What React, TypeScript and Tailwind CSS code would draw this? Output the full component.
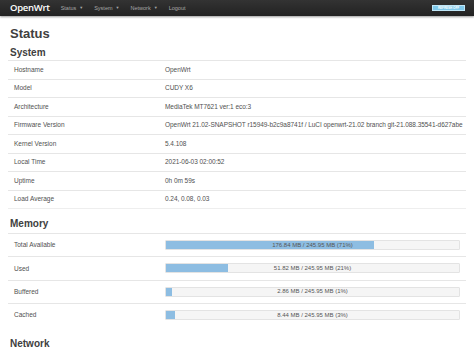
import React from 'react';

const sysRows: [string, string][] = [
  ['Hostname', 'OpenWrt'],
  ['Model', 'CUDY X6'],
  ['Architecture', 'MediaTek MT7621 ver:1 eco:3'],
  ['Firmware Version', 'OpenWrt 21.02-SNAPSHOT r15949-b2c9a8741f / LuCI openwrt-21.02 branch git-21.088.35541-d627abe'],
  ['Kernel Version', '5.4.108'],
  ['Local Time', '2021-06-03 02:00:52'],
  ['Uptime', '0h 0m 59s'],
  ['Load Average', '0.24, 0.08, 0.03'],
];

const memRows: { label: string; text: string; pct: number }[] = [
  { label: 'Total Available', text: '176.84 MB / 245.95 MB (71%)', pct: 71 },
  { label: 'Used', text: '51.82 MB / 245.95 MB (21%)', pct: 21 },
  { label: 'Buffered', text: '2.86 MB / 245.95 MB (1%)', pct: 1 },
  { label: 'Cached', text: '8.44 MB / 245.95 MB (3%)', pct: 3 },
];

const Caret = () => <span className="ml-[3px] text-[4px] align-middle">▼</span>;

export default function App() {
  return (
    <div className="w-[474px] h-[349px] overflow-hidden bg-white text-[#404040] font-['Liberation_Sans','Open_Sans',sans-serif]">
      <div className="h-[16px] flex items-center px-[10px] bg-gradient-to-b from-[#333] to-[#222] shadow-[0_1px_2px_rgba(0,0,0,0.4)]">
        <span className="text-[9.5px] text-white font-semibold tracking-[-0.3px] font-['Open_Sans',sans-serif]">OpenWrt</span>
        <nav className="flex items-center ml-[11px] gap-[11px] text-[5.5px] text-[#a8a8a8]">
          <span>Status<Caret /></span>
          <span>System<Caret /></span>
          <span>Network<Caret /></span>
          <span>Logout</span>
        </nav>
        <span className="ml-auto mr-[-1px] h-[6px] w-[33px] bg-[#7fc8ea] border border-[#bfe6f7] text-[3px] leading-[4px] text-white text-center font-bold">REFRESH OFF</span>
      </div>

      <div className="px-[8px]">
        <h2 className="pl-[2px] mt-[10px] text-[13px] leading-[16px] font-bold">Status</h2>
        <h3 className="pl-[2px] mt-[5px] text-[10px] leading-[12px] font-bold">System</h3>
        <div className="mt-[1px] border-b border-[#eee]">
          {sysRows.map(([k, v]) => (
            <div key={k} className="h-[18.5px] border-t border-[#e6e6e6] flex items-center text-[6.5px] text-[#505050]">
              <span className="w-[157px] pl-[6px]">{k}</span>
              <span className="whitespace-nowrap tracking-[-0.05px]">{v}</span>
            </div>
          ))}
        </div>

        <h3 className="pl-[2px] mt-[9px] text-[10px] leading-[12px] font-bold">Memory</h3>
        <div className="mt-[3px]">
          {memRows.map(r => (
            <div key={r.label} className="h-[23.3px] border-t border-[#e6e6e6] flex items-center text-[6.5px] text-[#505050]">
              <span className="w-[157px] pl-[6px]">{r.label}</span>
              <div className="relative w-[295px] h-[10px] bg-[#f5f5f5] border border-[#e3e3e3] rounded-[1px] overflow-hidden">
                <div className="h-full bg-[#8dbde2]" style={{ width: `${Math.max(r.pct, 2)}%` }} />
                <span className="absolute inset-0 flex items-center justify-center text-[6px] text-[#555]">{r.text}</span>
              </div>
            </div>
          ))}
        </div>

        <h3 className="pl-[2px] mt-[12px] text-[10px] leading-[12px] font-bold">Network</h3>
      </div>
    </div>
  );
}
